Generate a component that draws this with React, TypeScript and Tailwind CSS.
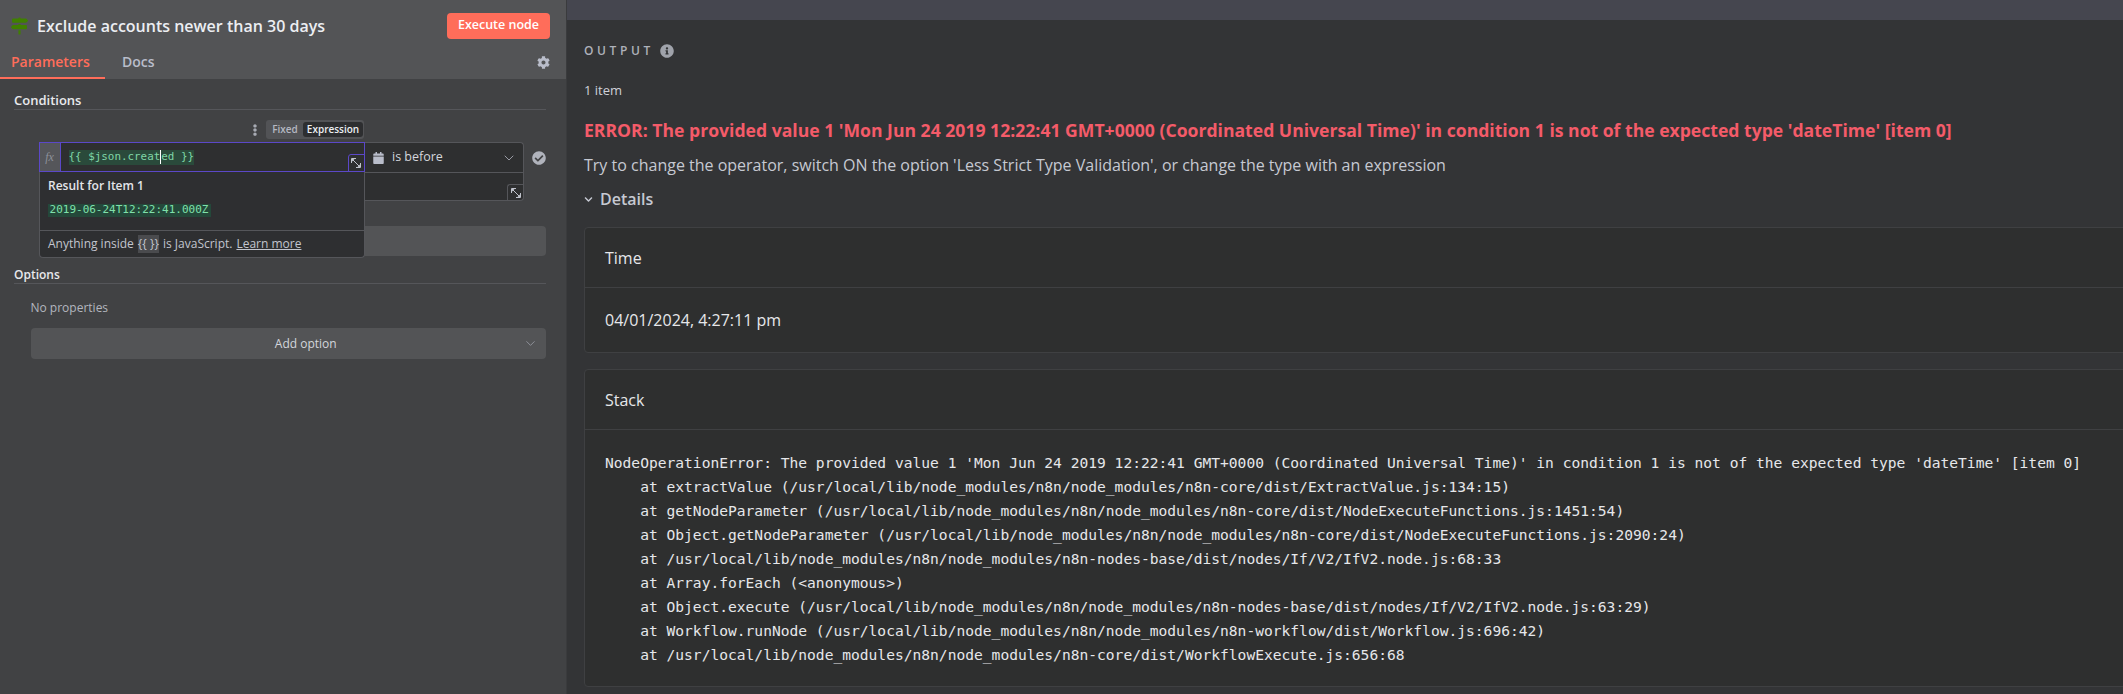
import { FaMapSigns, FaCog, FaCheckCircle, FaCalendar, FaInfoCircle, FaChevronDown, FaEllipsisV } from "react-icons/fa";
import { ChevronDown } from "lucide-react";

const stack = `NodeOperationError: The provided value 1 'Mon Jun 24 2019 12:22:41 GMT+0000 (Coordinated Universal Time)' in condition 1 is not of the expected type 'dateTime' [item 0]
    at extractValue (/usr/local/lib/node_modules/n8n/node_modules/n8n-core/dist/ExtractValue.js:134:15)
    at getNodeParameter (/usr/local/lib/node_modules/n8n/node_modules/n8n-core/dist/NodeExecuteFunctions.js:1451:54)
    at Object.getNodeParameter (/usr/local/lib/node_modules/n8n/node_modules/n8n-core/dist/NodeExecuteFunctions.js:2090:24)
    at /usr/local/lib/node_modules/n8n/node_modules/n8n-nodes-base/dist/nodes/If/V2/IfV2.node.js:68:33
    at Array.forEach (<anonymous>)
    at Object.execute (/usr/local/lib/node_modules/n8n/node_modules/n8n-nodes-base/dist/nodes/If/V2/IfV2.node.js:63:29)
    at Workflow.runNode (/usr/local/lib/node_modules/n8n/node_modules/n8n-workflow/dist/Workflow.js:696:42)
    at /usr/local/lib/node_modules/n8n/node_modules/n8n-core/dist/WorkflowExecute.js:656:68`;

function Expand({ className }: { className: string }) {
  return (
    <div className={className}>
      <svg width="10" height="10" viewBox="0 0 10 10" fill="none" stroke="#c0c3cc" strokeWidth="1">
        <path d="M0.5 5V0.5H5M9.5 5v4.5H5M1.5 1.5l7 7" />
        <path d="M1 1h2.5L1 3.5zM9 9H6.5L9 6.5z" fill="#c0c3cc" stroke="none" />
      </svg>
    </div>
  );
}

export default function App() {
  return (
    <div className="flex h-[694px] w-[2123px] overflow-hidden bg-[#333436] font-['Open_Sans',sans-serif]">
      <div className="flex w-[567px] shrink-0 flex-col border-r border-[#3a3b3d] bg-[#414244]">
        <div className="h-[79px] shrink-0 bg-[#535456]">
          <div className="flex h-[50px] items-center pl-[11px] pr-[16px] pt-[1px]">
            <FaMapSigns className="h-[18px] w-[17px] text-[#408000]" />
            <span className="ml-[9px] text-[16px] font-semibold text-[#eceef2]">Exclude accounts newer than 30 days</span>
            <button className="ml-auto flex h-[26px] w-[103px] items-center justify-center rounded-[4px] bg-[#ff6d5a] text-[12.5px] font-semibold text-white">Execute node</button>
          </div>
          <div className="flex h-[29px] items-start">
            <div className="flex h-[29px] w-[105px] items-start border-b-[2px] border-[#ff6d5a] pl-[11px] pt-[2px] text-[14px] font-semibold leading-5 text-[#ff6d5a]">Parameters</div>
            <div className="ml-[17px] pt-[2px] text-[14px] font-semibold leading-5 text-[#b9bdca]">Docs</div>
            <FaCog className="ml-auto mr-[16px] mt-[6px] h-[13px] w-[13px] text-[#b9bdca]" />
          </div>
        </div>

        <div className="pl-[14px] pr-[20px] pt-[12px]">
          <div className="h-[19px] border-b border-[#55565a] text-[13px] font-semibold leading-[18px] text-[#e8e9ec]">Conditions</div>

          <div className="relative h-[156px] pl-[24px]">
            <div className="flex h-[29px] items-end justify-end pr-[182px]">
              <FaEllipsisV className="mb-[3px] mr-[6px] h-[12px] w-[10px] text-[#a7aab3]" />
              <div className="flex h-[19px] w-[98px] items-center rounded-[3px] bg-[#525356] pl-[1px] text-[10px] font-semibold">
                <span className="w-[36px] text-center text-[#b5b8c2]">Fixed</span>
                <span className="flex h-[15px] w-[60px] items-center justify-center rounded-[3px] bg-[#2d2e30] text-[#eceef2]">Expression</span>
              </div>
            </div>
            <div className="mt-[3px] flex items-start pl-[1px]">
              <div className="w-[325px] shrink-0" />
              <div>
                <div className="flex h-[30px] w-[160px] items-center rounded-tr-[4px] border-r border-t border-[#55565a] bg-[#2e2f30] pl-[9px] text-[12.5px] text-[#d4d6dc]">
                  <FaCalendar className="h-[12px] w-[11px] text-[#b9bdca]" />
                  <span className="ml-[8px]">is before</span>
                  <ChevronDown className="ml-auto mr-[6px] h-[16px] w-[16px] text-[#a0a3ad]" strokeWidth={1.4} />
                </div>
                <div className="relative h-[29px] w-[160px] rounded-br-[4px] border border-l-0 border-[#55565a] bg-[#2e2f30]">
                  <Expand className="absolute bottom-0 right-0 flex h-[16px] w-[16px] items-center justify-center rounded-tl-[3px] border-l border-t border-[#55565a]" />
                </div>
              </div>
              <FaCheckCircle className="ml-[8px] mt-[9px] h-[14px] w-[14px] text-[#b0b3bc]" />
            </div>
            <div className="ml-[1px] mt-[25px] h-[30px] rounded-[4px] bg-[#535456]" />

            <div className="absolute left-[24.5px] top-[32px] w-[326px]">
              <div className="relative flex h-[30px] items-center border border-[#5b48c8] bg-[#2e2f30]">
                <div className="flex h-full w-[21px] items-center justify-center border-r border-[#5b48c8] bg-[#55565a] font-['Liberation_Serif',serif] text-[12px] italic text-[#8d9099]">fx</div>
                <div className="ml-[8px] flex h-[15px] items-center bg-[#2a4a3b] font-['DejaVu_Sans_Mono',monospace] text-[10.9px] text-[#7fd6a6]">
                  {"{{ $json.creat"}<span className="h-[14px] w-[1px] bg-white" />{"ed }}"}
                </div>
                <Expand className="absolute bottom-[-1px] right-[-1px] flex h-[18px] w-[17px] items-center justify-center rounded-tl-[3px] border border-[#5b48c8]" />
              </div>
              <div className="h-[86px] rounded-b-[4px] border border-t-0 border-[#55565a] bg-[#2e2f31]">
                <div className="pl-[8.5px] pt-[5px] text-[12px] font-semibold leading-[18px] text-[#e4e5e9]">Result for Item 1</div>
                <div className="ml-[8px] mt-[9px] flex h-[13px] w-[163px] items-center justify-center bg-[#24483a] font-['DejaVu_Sans_Mono',monospace] text-[11px] text-[#7fe0aa]">2019-06-24T12:22:41.000Z</div>
                <div className="mt-[13px] flex h-[27px] items-center border-t border-[#55565a] pl-[8.5px] text-[12px] text-[#c2c5ce]">
                  Anything inside<span className="mx-[4px] bg-[#4a4b4e]">{"{{ }}"}</span>is JavaScript.<span className="ml-[4px] underline">Learn more</span>
                </div>
              </div>
            </div>
          </div>

          <div className="mt-[-1px] h-[19px] border-b border-[#55565a] pt-[1px] text-[12px] font-semibold leading-[17px] text-[#e8e9ec]">Options</div>
          <div className="pl-[16.5px]">
            <div className="mt-[15px] text-[12px] leading-[18px] text-[#b3b6bf]">No properties</div>
            <div className="relative mt-[11px] flex h-[31px] items-center justify-center rounded-[4px] bg-[#535456] pl-[35px] text-[12px] font-medium text-[#d4d6dc]">
              Add option
              <ChevronDown className="absolute right-[8px] top-[8px] h-[15px] w-[15px] text-[#a0a3ad]" strokeWidth={1.2} />
            </div>
          </div>
        </div>
      </div>

      <div className="flex min-w-0 flex-1 flex-col">
        <div className="h-[20px] shrink-0 bg-[#45464f]" />
        <div className="pl-[17px]">
          <div className="mt-[22px] flex h-[18px] items-center">
            <span className="text-[12px] font-semibold tracking-[0.3em] text-[#aeb1ba]">OUTPUT</span>
            <FaInfoCircle className="ml-[6px] h-[14px] w-[14px] text-[#a0a3ab]" />
          </div>
          <div className="mt-[21px] text-[13px] leading-[18px] text-[#cfd1d8]">1 item</div>
          <div className="mt-[18px] whitespace-nowrap text-[17.6px] font-bold leading-[26px] text-[#f45b69]">ERROR: The provided value 1 'Mon Jun 24 2019 12:22:41 GMT+0000 (Coordinated Universal Time)' in condition 1 is not of the expected type 'dateTime' [item 0]</div>
          <div className="mt-[10px] whitespace-nowrap text-[16px] leading-[24px] text-[#c6c9d2]">Try to change the operator, switch ON the option 'Less Strict Type Validation', or change the type with an expression</div>
          <div className="mt-[12px] flex h-[20px] items-center text-[16px] font-semibold text-[#c6c9d2]">
            <FaChevronDown className="h-[9px] w-[9px]" />
            <span className="ml-[7px]">Details</span>
          </div>

          <div className="mt-[18px] w-[1600px] rounded-[4px] border border-[#3f4042] bg-[#2e2f2f]">
            <div className="flex h-[60px] items-center border-b border-[#3f4042] pl-[20px] text-[16px] text-[#e6e7ea]">Time</div>
            <div className="flex h-[64px] items-center pl-[20px] text-[16px] text-[#e6e7ea]">04/01/2024, 4:27:11 pm</div>
          </div>
          <div className="mt-[16px] w-[1600px] rounded-[4px] border border-[#3f4042] bg-[#2e2f2f]">
            <div className="flex h-[60px] items-center border-b border-[#3f4042] pl-[20px] text-[16px] text-[#e6e7ea]">Stack</div>
            <pre className="h-[256px] pl-[20px] pt-[21px] font-['DejaVu_Sans_Mono',monospace] text-[14.6px] leading-[24px] text-[#e6e7ea]">{stack}</pre>
          </div>
        </div>
      </div>
    </div>
  );
}
